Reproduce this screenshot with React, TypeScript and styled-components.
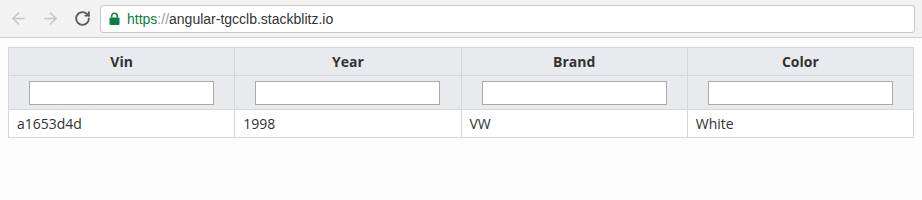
import * as React from "react";
import styled, { createGlobalStyle } from "styled-components";
import { ArrowLeft, ArrowRight, RotateCw } from "lucide-react";

const GlobalStyle = createGlobalStyle`
  html, body {
    margin: 0;
    padding: 0;
    background: #fdfdfd;
    font-family: "Open Sans", "Liberation Sans", sans-serif;
  }
`;

const Toolbar = styled.header`
  height: 37px;
  display: flex;
  align-items: center;
  background: #f2f2f2;
  border-bottom: 1px solid #cfcfcf;
  padding: 0 7px 0 6px;
`;

const NavGroup = styled.nav`
  display: flex;
  gap: 8px;
  margin-right: 6px;
`;

const NavButton = styled.div<{ $dim?: boolean }>`
  width: 24px;
  height: 24px;
  display: flex;
  align-items: center;
  justify-content: center;
  color: ${(p) => (p.$dim ? "#c6c6c6" : "#5b5b5b")};
`;

const Omnibox = styled.div`
  flex: 1;
  height: 26px;
  display: flex;
  align-items: center;
  background: #fff;
  border: 1px solid #c8c8c8;
  border-radius: 3px;
  padding-left: 8px;
  font-family: "Liberation Sans", Arial, sans-serif;
  font-size: 14px;
  color: #333;
  .lock {
    margin-right: 7px;
  }
  .scheme {
    color: #0b8043;
  }
  .sep {
    color: #999;
  }
`;

const Page = styled.main`
  padding: 9px 8px;
`;

const Grid = styled.table`
  width: 100%;
  border-collapse: collapse;
  table-layout: fixed;
  font-size: 14px;
  color: #333;
`;

const HeadCell = styled.th`
  background: #e9eaee;
  border: 1px solid #d6d7db;
  height: 27px;
  padding: 0;
  font-weight: 700;
  text-align: center;
`;

const FilterCell = styled.th`
  background: #e9eaee;
  border: 1px solid #d6d7db;
  height: 33px;
  padding: 0;
  text-align: center;
`;

const FilterInput = styled.input`
  box-sizing: border-box;
  width: 185px;
  height: 24px;
  border: 1px solid #a9a9a9;
  background: #fff;
  margin: 0;
  vertical-align: middle;
`;

const Cell = styled.td`
  border: 1px solid #d6d7db;
  background: #fff;
  height: 27px;
  padding: 0 8px;
`;

const columns = ["Vin", "Year", "Brand", "Color"];
const rows = [["a1653d4d", "1998", "VW", "White"]];

function LockIcon() {
  return (
    <svg className="lock" width="11" height="13" viewBox="0 0 11 13">
      <path d="M2.7 5.5V4a2.8 2.8 0 0 1 5.6 0v1.5" fill="none" stroke="#0b8043" strokeWidth="1.6" />
      <rect x="0.5" y="5.5" width="10" height="7.5" rx="1" fill="#0b8043" />
    </svg>
  );
}

export default function App() {
  return (
    <>
      <GlobalStyle />
      <Toolbar>
        <NavGroup>
          <NavButton $dim>
            <ArrowLeft size={19} strokeWidth={2} />
          </NavButton>
          <NavButton $dim>
            <ArrowRight size={19} strokeWidth={2} />
          </NavButton>
          <NavButton>
            <RotateCw size={17} strokeWidth={2.6} />
          </NavButton>
        </NavGroup>
        <Omnibox>
          <LockIcon />
          <span className="scheme">https</span>
          <span className="sep">://</span>
          <span>angular-tgcclb.stackblitz.io</span>
        </Omnibox>
      </Toolbar>
      <Page>
        <Grid>
          <thead>
            <tr>
              {columns.map((c) => (
                <HeadCell key={c}>{c}</HeadCell>
              ))}
            </tr>
            <tr>
              {columns.map((c) => (
                <FilterCell key={c}>
                  <FilterInput type="text" />
                </FilterCell>
              ))}
            </tr>
          </thead>
          <tbody>
            {rows.map((r, i) => (
              <tr key={i}>
                {r.map((v, j) => (
                  <Cell key={j}>{v}</Cell>
                ))}
              </tr>
            ))}
          </tbody>
        </Grid>
      </Page>
    </>
  );
}
